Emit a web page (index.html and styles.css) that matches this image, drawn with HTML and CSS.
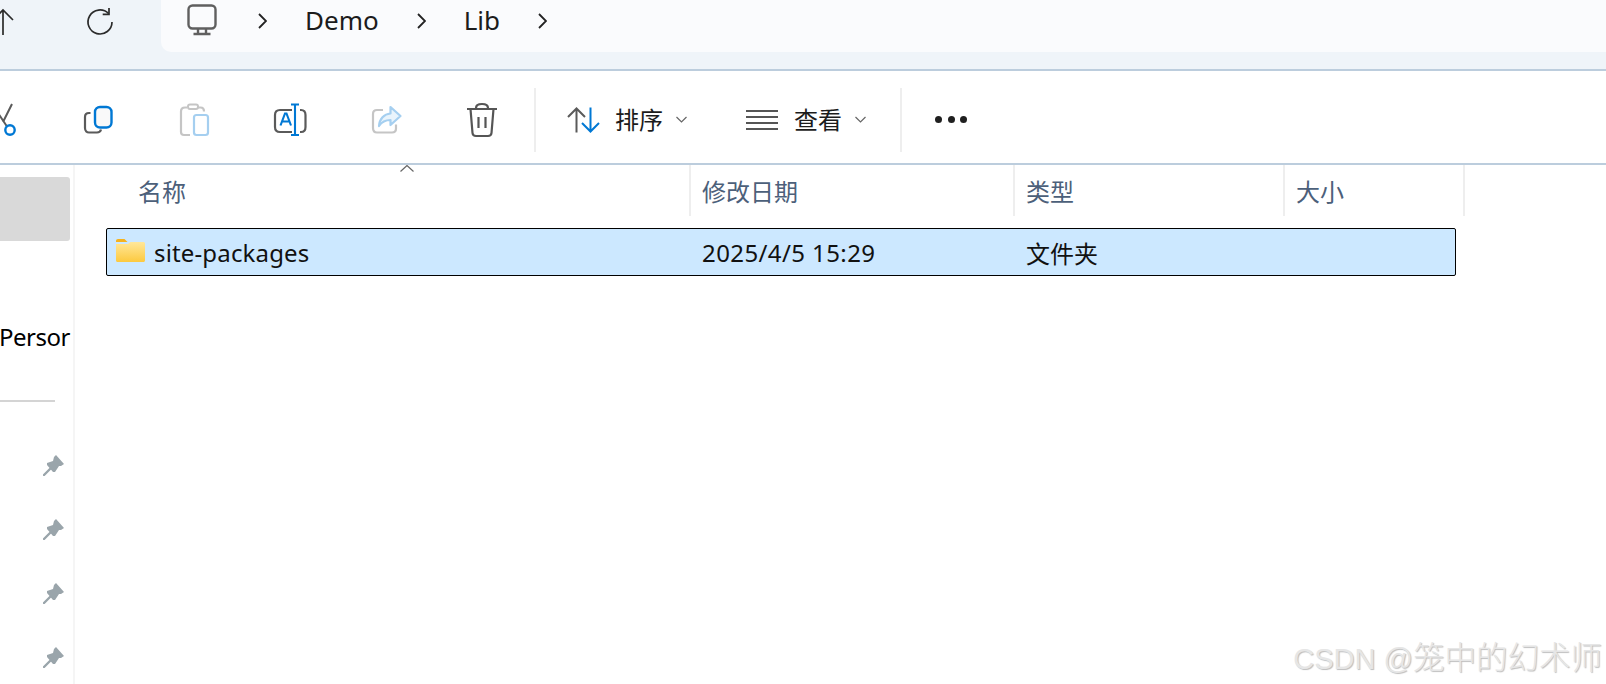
FILE: index.html
```html
<!DOCTYPE html>
<html lang="zh-CN">
<head>
<meta charset="utf-8">
<title>Lib</title>
<link rel="stylesheet" href="styles.css">
</head>
<body>
<div class="window">
  <header class="topbar">
    <div class="nav-btn">
      <svg width="32" height="32" viewBox="0 0 32 32" fill="none" stroke="#2b2b2b" stroke-width="1.7"><path d="M16 29V4M6 14 16 4l10 10"/></svg>
    </div>
    <div class="nav-btn refresh">
      <svg width="32" height="32" viewBox="0 0 32 32" fill="none" stroke="#2b2b2b" stroke-width="1.7"><path d="M24.500 7.500A12 12 0 1 0 28 16"/><path d="M25 2v6.300h-6.300"/></svg>
    </div>
    <nav class="address">
      <svg class="pc" width="30" height="32" viewBox="0 0 30 32" fill="none" stroke="#5f5f5f" stroke-width="2.400"><rect x="1.500" y="1.500" width="27" height="23" rx="4"/><path d="M11 25v4M19 25v4M6.500 30h17"/></svg>
      <svg class="chev" width="9" height="16" viewBox="0 0 9 16" fill="none" stroke="#222" stroke-width="1.800"><path d="m1 1 7 7-7 7"/></svg>
      <span>Demo</span>
      <svg class="chev" width="9" height="16" viewBox="0 0 9 16" fill="none" stroke="#222" stroke-width="1.800"><path d="m1 1 7 7-7 7"/></svg>
      <span>Lib</span>
      <svg class="chev" width="9" height="16" viewBox="0 0 9 16" fill="none" stroke="#222" stroke-width="1.800"><path d="m1 1 7 7-7 7"/></svg>
    </nav>
  </header>

  <section class="toolbar">
    <div class="tool">
      <svg width="34" height="36" viewBox="0 0 34 36" fill="none"><path d="M27 2 18 20M13 11l9 13.500" stroke="#5a5a5a" stroke-width="2"/><circle cx="25" cy="28" r="4.700" stroke="#0078d4" stroke-width="2.400"/></svg>
    </div>
    <div class="tool">
      <svg width="34" height="36" viewBox="0 0 34 36" fill="none"><path d="M9.500 11H8c-2.500 0-4 1.500-4 4v11c0 3 2 4.500 4 4.500h8c2 0 3.500-1 4-3" stroke="#5a5a5a" stroke-width="2.200"/><rect x="14" y="5" width="16.500" height="20.500" rx="5" fill="#f9f9f9" stroke="#0078d4" stroke-width="2.400"/></svg>
    </div>
    <div class="tool">
      <svg width="34" height="36" viewBox="0 0 34 36" fill="none"><path d="M10 5.500H8c-2.500 0-4 1.500-4 4V30c0 2 1 3 3 3h6M21 5.500h2.500c2.500 0 3.500 1.500 3.500 4" stroke="#c5c5c5" stroke-width="2.200"/><rect x="11" y="2.500" width="10" height="4.500" rx="2" stroke="#c5c5c5" stroke-width="2"/><rect x="17" y="13" width="14" height="20" rx="2.500" stroke="#a5cff0" stroke-width="2.200"/></svg>
    </div>
    <div class="tool">
      <svg width="34" height="36" viewBox="0 0 34 36" fill="none"><path d="M19 8H7C4 8 2 10 2 13v12c0 3 2 5 5 5h12M27 8h1c3 0 4.500 2 4.500 5v12c0 3-1.500 5-4.500 5h-1" stroke="#5a5a5a" stroke-width="2.200"/><path d="M7.500 23.500 12 11.500h1.500l4.500 12M9.300 19.500h6.900M18 2.500h8M22 2.500v30.500M18 33h8" stroke="#0078d4" stroke-width="2.100"/></svg>
    </div>
    <div class="tool">
      <svg width="34" height="36" viewBox="0 0 34 36" fill="none"><path d="M14 8H8C5 8 4 9.500 4 12v14c0 3 1.500 4.500 4 4.500h15c2.500 0 4-1.500 4-4v-4" stroke="#c5c5c5" stroke-width="2.200"/><path d="M21.500 5 31.500 14 21.500 23v-5c-5 0-8.500 1.500-11.500 6 .5-7 5-12 11.500-12.500z" fill="#e9f4fc" stroke="#a5cff0" stroke-width="2.200" stroke-linejoin="round"/></svg>
    </div>
    <div class="tool">
      <svg width="34" height="36" viewBox="0 0 34 36" fill="none" stroke="#555" stroke-width="2.200"><path d="M2 7h30M11 7V6c0-2.500 2-4 6-4s6 1.500 6 4v1M5.500 7l2 24c.2 2 1.500 3 3.500 3h12c2 0 3.300-1 3.500-3l2-24M13.500 15v11M20.500 15v11"/></svg>
    </div>
    <div class="tool-divider"></div>
    <div class="menu sort-menu">
      <svg width="33" height="26" viewBox="0 0 33 26" fill="none" stroke-width="2"><path d="M9.500 25.500V1.500M1 10 9.500 1.500 18 10" stroke="#5a5a5a"/><path d="M23.500 .5v24M15 16l8.500 8.500L32 16" stroke="#0078d4"/></svg>
      <span class="menu-label">排序</span>
      <svg class="caret" width="11" height="7" viewBox="0 0 11 7" fill="none" stroke="#666" stroke-width="1.200"><path d="m.5 1 5 5 5-5"/></svg>
    </div>
    <div class="menu view-menu">
      <svg width="32" height="22" viewBox="0 0 32 22" fill="none" stroke="#555" stroke-width="2"><path d="M0 2h32M0 8h32M0 14h32M0 20h32"/></svg>
      <span class="menu-label">查看</span>
      <svg class="caret" width="11" height="7" viewBox="0 0 11 7" fill="none" stroke="#666" stroke-width="1.200"><path d="m.5 1 5 5 5-5"/></svg>
    </div>
    <div class="tool-divider second"></div>
    <div class="more"><i></i><i></i><i></i></div>
  </section>

  <div class="body">
    <aside class="sidebar">
      <div class="side-selected"></div>
      <div class="side-person">Persor</div>
      <div class="side-rule"></div>
      <ul class="pins">
        <li><svg width="21" height="21" viewBox="0 0 21 21"><path d="M13 0 21 9 18 11 16 11 12 17 10 17 4 10 4 8 10 6 11 2z" fill="#9aa5ab"/><path d="M1 20 7.500 13.500" stroke="#9aa5ab" stroke-width="2.400" stroke-linecap="round"/></svg></li>
        <li><svg width="21" height="21" viewBox="0 0 21 21"><path d="M13 0 21 9 18 11 16 11 12 17 10 17 4 10 4 8 10 6 11 2z" fill="#9aa5ab"/><path d="M1 20 7.500 13.500" stroke="#9aa5ab" stroke-width="2.400" stroke-linecap="round"/></svg></li>
        <li><svg width="21" height="21" viewBox="0 0 21 21"><path d="M13 0 21 9 18 11 16 11 12 17 10 17 4 10 4 8 10 6 11 2z" fill="#9aa5ab"/><path d="M1 20 7.500 13.500" stroke="#9aa5ab" stroke-width="2.400" stroke-linecap="round"/></svg></li>
        <li><svg width="21" height="21" viewBox="0 0 21 21"><path d="M13 0 21 9 18 11 16 11 12 17 10 17 4 10 4 8 10 6 11 2z" fill="#9aa5ab"/><path d="M1 20 7.500 13.500" stroke="#9aa5ab" stroke-width="2.400" stroke-linecap="round"/></svg></li>
      </ul>
    </aside>

    <main class="files">
      <div class="sort-caret"><svg width="14" height="7" viewBox="0 0 14 7" fill="none" stroke="#666" stroke-width="1.200"><path d="m.5 6.500 6.500-6 6.500 6"/></svg></div>
      <div class="head">
        <div class="col col-name">名称</div>
        <div class="col">修改日期</div>
        <div class="col">类型</div>
        <div class="col col-last">大小</div>
      </div>
      <div class="row">
        <div class="cell cell-name">
          <svg width="29" height="23" viewBox="0 0 29 23"><defs><linearGradient id="folderFill" x1="0" y1="0" x2="0" y2="1"><stop offset="0" stop-color="#ffe79a"/><stop offset="1" stop-color="#fcc93f"/></linearGradient></defs><path d="M0 2C0 .8 .8 0 2 0h6.500l3 3H0z" fill="#f5b21d"/><path d="M0 5h12l2.500-2h13C28.300 3 29 3.700 29 4.500V21.500c0 .9-.7 1.500-1.500 1.500h-26C.7 23 0 22.400 0 21.500z" fill="url(#folderFill)"/></svg>
          <span class="file-name">site-packages</span>
        </div>
        <div class="cell cell-date">2025/4/5 15:29</div>
        <div class="cell">文件夹</div>
      </div>
    </main>
  </div>
  <div class="watermark"><span class="wm-latin">CSDN @</span><span class="wm-cjk">笼中的幻术师</span></div>
</div>
</body>
</html>
```
FILE: styles.css
```css
* { box-sizing: border-box; }
html, body { margin: 0; padding: 0; background: #fff; }
body {
  width: 1606px;
  height: 684px;
  overflow: hidden;
  font-family: "Noto Sans", "Noto Sans CJK SC", sans-serif;
  color: #1c1c1c;
}
.window { position: relative; width: 1606px; height: 684px; overflow: hidden; }

.topbar {
  display: flex;
  height: 71px;
  margin-left: -45px;
  width: 1651px;
  background: #eff4f9;
  border-bottom: 2px solid #bccddd;
}
.nav-btn {
  width: 96px;
  height: 44px;
  display: flex;
  align-items: center;
  justify-content: center;
}
.nav-btn.refresh { padding-left: 2px; }
.address {
  flex: 1;
  height: 52px;
  margin-left: 14px;
  padding: 0 0 12px 26px;
  display: flex;
  align-items: center;
  gap: 38px;
  background: #fafbfd;
  border-bottom-left-radius: 10px;
  font-size: 26px;
  line-height: 40px;
}
.address .pc { margin-right: 3px; }
.address .chev { margin-top: 2px; }

.toolbar {
  display: flex;
  align-items: center;
  height: 94px;
  margin-left: -46px;
  width: 1652px;
  padding-top: 5px;
  border-bottom: 2px solid #bccddd;
  color: #1c1c1c;
}
.tool {
  width: 96px;
  display: flex;
  justify-content: center;
}
.tool-divider {
  width: 2px;
  height: 64px;
  margin-left: 4px;
  background: #eeeeee;
}
.tool-divider.second { margin-left: 34px; }
.menu { display: flex; align-items: center; }
.sort-menu { margin-left: 31px; }
.view-menu { margin-left: 59px; }
.view-menu .menu-label { margin-left: 16px; }
.menu-label {
  margin-left: 15px;
  font-size: 24px;
  line-height: 32px;
}
.caret { margin-left: 13px; }
.more {
  display: flex;
  gap: 5.500px;
  margin-left: 33px;
}
.more i {
  width: 7px;
  height: 7px;
  border-radius: 50%;
  background: #1f1f1f;
}

.body { display: flex; height: 519px; }
.sidebar {
  width: 75px;
  flex: none;
  overflow: hidden;
  border-right: 2px solid #f5f5f5;
}
.side-selected {
  width: 70px;
  height: 64px;
  margin-top: 12px;
  background: #d9d9d9;
  border-radius: 0 3px 3px 0;
}
.side-person {
  margin-top: 78px;
  margin-left: -1px;
  font-size: 24px;
  line-height: 36px;
  letter-spacing: -0.5px;
  color: #000;
  white-space: nowrap;
}
.side-rule {
  width: 55px;
  height: 2px;
  margin-top: 45px;
  background: #d4d4d4;
}
.pins { list-style: none; margin: 31px 0 0; padding: 0 0 0 43px; }
.pins li { height: 64px; display: flex; align-items: center; }

.files { position: relative; flex: 1; }
.sort-caret { position: absolute; left: 325px; top: 0; line-height: 0; }
.head {
  display: grid;
  grid-template-columns: 614px 324px 270px 182px;
  height: 51px;
}
.col {
  padding: 4px 0 0 11px;
  border-left: 2px solid #eeeeee;
  font-size: 24px;
  line-height: 46px;
  color: #4c607a;
}
.col-name { padding-left: 63px; border-left: none; }
.col-last { border-right: 2px solid #eeeeee; }

.row {
  display: grid;
  grid-template-columns: 595px 324px 1fr;
  align-items: center;
  width: 1350px;
  height: 48px;
  margin: 12px 0 0 31px;
  background: #cce8ff;
  border: 1px solid #000;
  border-radius: 2px;
  font-size: 24px;
  color: #111;
}
.cell { white-space: nowrap; }
.cell-name { display: flex; align-items: center; gap: 10px; padding-left: 9px; }
.cell-name svg { margin-top: -3px; }
.file-name { letter-spacing: 0.15px; margin-left: -1px; }
.cell-date { letter-spacing: 0.4px; }

.watermark {
  position: absolute;
  right: 4px;
  top: 638px;
  white-space: nowrap;
  color: #e6e6e6;
  text-shadow: 1px 1px 1px #bdbdbd;
  font-family: "Liberation Sans", "Noto Sans CJK SC", sans-serif;
  font-weight: 300;
  line-height: 40px;
}
.wm-latin { font-size: 29px; }
.wm-cjk { font-size: 31.500px; font-family: "Liberation Sans", "Noto Sans CJK SC", sans-serif; }
```
